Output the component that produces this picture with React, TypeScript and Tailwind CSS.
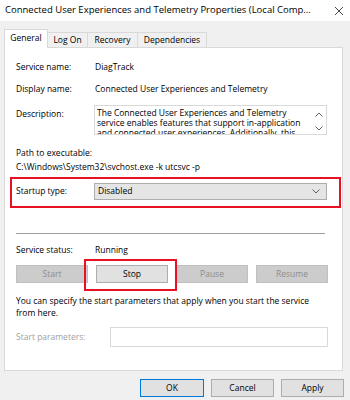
import React from 'react'

const font = { fontFamily: '"Open Sans", "Noto Sans", sans-serif' }

function Chevron({ up = false, className = '' }: { up?: boolean; className?: string }) {
  return (
    <svg width="8" height="5" viewBox="0 0 8 5" className={className}>
      <path
        d={up ? 'M0.5 4.5 L4 1 L7.5 4.5' : 'M0.5 0.5 L4 4 L7.5 0.5'}
        fill="none"
        stroke="#606060"
        strokeWidth="1"
      />
    </svg>
  )
}

function Btn({
  label,
  disabled = false,
  primary = false,
  className = '',
}: {
  label: string
  disabled?: boolean
  primary?: boolean
  className?: string
}) {
  return (
    <div
      className={
        'flex items-center justify-center border text-[8.5px] ' +
        (disabled
          ? 'bg-[#cccccc] border-[#bfbfbf] text-[#8d8d8d] '
          : primary
            ? 'bg-[#e1e1e1] border-[#0078d7] text-black '
            : 'bg-[#e1e1e1] border-[#adadad] text-black ') +
        className
      }
    >
      {label}
    </div>
  )
}

export default function App() {
  return (
    <div className="w-[350px] h-[400px] bg-[#f0f0f0] text-black overflow-hidden" style={font}>
      {/* Title bar */}
      <div className="h-[21px] bg-white flex items-center pl-[5px] pr-[5px]">
        <span className="text-[9.5px] whitespace-nowrap">
          Connected User Experiences and Telemetry Properties (Local Comp...
        </span>
        <svg width="10" height="10" viewBox="0 0 10 10" className="ml-auto mr-[1px]">
          <path d="M1 1 L9 9 M9 1 L1 9" stroke="#333" strokeWidth="0.9" />
        </svg>
      </div>

      {/* Tabs */}
      <div className="h-[26px] flex items-end pl-[4px] relative z-10">
        <div className="h-[19px] w-[44px] bg-white border border-[#d9d9d9] border-b-0 flex items-center justify-center text-[8.5px] -mb-[1px] pb-[2px]">
          General
        </div>
        <div className="h-[15px] w-[40px] border border-[#d9d9d9] border-l-0 border-b-0 flex items-center justify-center text-[8.5px]">
          Log On
        </div>
        <div className="h-[15px] w-[50px] border border-[#d9d9d9] border-l-0 border-b-0 flex items-center justify-center text-[8.5px]">
          Recovery
        </div>
        <div className="h-[15px] w-[69px] border border-[#d9d9d9] border-l-0 border-b-0 flex items-center justify-center text-[8.5px]">
          Dependencies
        </div>
      </div>

      {/* Panel */}
      <div className="ml-[4px] w-[339px] h-[324px] bg-white border border-[#d9d9d9] relative pl-[11px] text-[8.5px]">
        <div className="mt-[12px] h-[14px] flex items-center">
          <span className="w-[79px]">Service name:</span>
          <span>DiagTrack</span>
        </div>
        <div className="mt-[8px] h-[14px] flex items-center">
          <span className="w-[79px]">Display name:</span>
          <span>Connected User Experiences and Telemetry</span>
        </div>
        <div className="mt-[9px] flex">
          <span className="w-[78px] mt-[4px] leading-[10px]">Description:</span>
          <div className="w-[233px] h-[30px] border border-[#d9d9d9] flex overflow-hidden">
            <div className="flex-1 pl-[2px] pt-[2px] leading-[10px] whitespace-nowrap overflow-hidden">
              <div>The Connected User Experiences and Telemetry</div>
              <div>service enables features that support in-application</div>
              <div>and connected user experiences. Additionally, this</div>
            </div>
            <div className="w-[15px] flex flex-col items-center justify-between pt-[6px] pb-[3px]">
              <Chevron up />
              <Chevron />
            </div>
          </div>
        </div>
        <div className="mt-[11px] h-[14px] flex items-center">Path to executable:</div>
        <div className="h-[14px] flex items-center">
          {'C:\\Windows\\System32\\svchost.exe -k utcsvc -p'}
        </div>
        <div className="mt-[9px] h-[17px] flex items-center">
          <span className="w-[78px]">Startup type:</span>
          <div className="w-[233px] h-[17px] bg-[#e5e5e5] border border-[#adadad] flex items-center pl-[3px] pr-[6px]">
            <span>Disabled</span>
            <Chevron className="ml-auto" />
          </div>
        </div>
        <div className="mt-[33px] w-[309px] h-[1px] bg-[#a0a0a0]" />
        <div className="mt-[9px] h-[14px] flex items-center">
          <span className="w-[79px]">Service status:</span>
          <span>Running</span>
        </div>
        <div className="mt-[8px] h-[18px] flex gap-[8px]">
          <Btn label="Start" disabled className="w-[72px]" />
          <Btn label="Stop" className="w-[72px]" />
          <Btn label="Pause" disabled className="w-[72px]" />
          <Btn label="Resume" disabled className="w-[72px]" />
        </div>
        <div className="mt-[12px] leading-[12px]">
          <div>You can specify the start parameters that apply when you start the service</div>
          <div>from here.</div>
        </div>
        <div className="mt-[8px] h-[20px] flex items-center">
          <span className="w-[94px] text-[#a0a0a0]">Start parameters:</span>
          <div className="w-[218px] h-[20px] border border-[#d9d9d9] bg-white" />
        </div>

        {/* Red annotation boxes */}
        <div className="absolute left-[5px] top-[129px] w-[331px] h-[31px] border-2 border-[#e81123]" />
        <div className="absolute left-[79px] top-[211px] w-[93px] h-[32px] border-2 border-[#e81123]" />
      </div>

      {/* Bottom buttons */}
      <div className="mt-[8px] flex justify-end gap-[7px] pr-[6px]">
        <Btn label="OK" primary className="w-[64px] h-[18px]" />
        <Btn label="Cancel" className="w-[63px] h-[18px]" />
        <Btn label="Apply" className="w-[63px] h-[18px]" />
      </div>
    </div>
  )
}
